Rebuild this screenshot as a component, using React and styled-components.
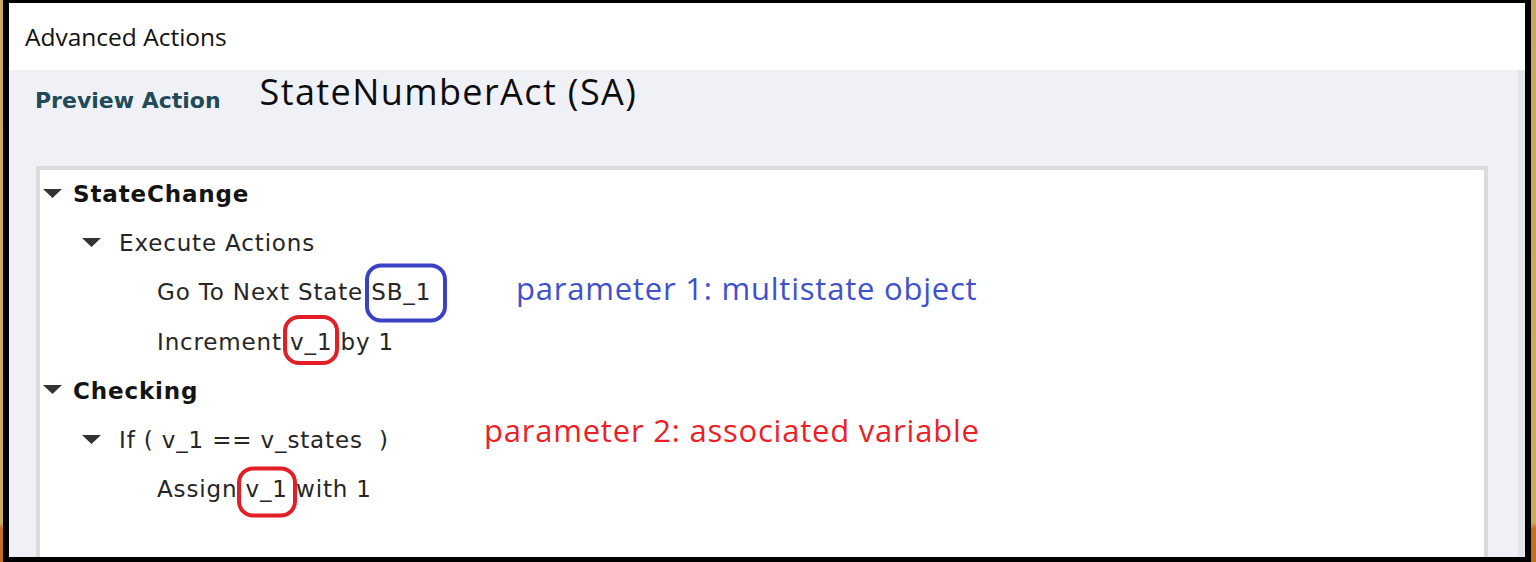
import React from "react";
import styled, { createGlobalStyle } from "styled-components";

const Global = createGlobalStyle`
  html, body { margin: 0; padding: 0; }
  body {
    width: 1536px;
    height: 562px;
    overflow: hidden;
    background: #c9ab62;
  }
  #root { height: 562px; }
`;

const Desktop = styled.div`
  height: 562px;
  display: flex;
  padding: 0 5px 0 3px;
  box-sizing: border-box;
  background: linear-gradient(to bottom, #c7a95f 0%, #c9ab62 93%, #c27320 94%, #c06e1c 100%);
`;

const Window = styled.div`
  flex: 1;
  display: flex;
  flex-direction: column;
  border-style: solid;
  border-color: #000;
  border-width: 3px 6px 5px 6px;
  box-sizing: border-box;
  min-width: 0;
  overflow: hidden;
`;

const Header = styled.div`
  height: 67px;
  flex: none;
  box-sizing: border-box;
  background: #fff;
  padding: 20px 0 0 16px;
  font-family: "Open Sans", "Noto Sans", sans-serif;
  font-size: 24.5px;
  line-height: 28px;
  color: #111;
`;

const Panel = styled.div`
  flex: 1;
  min-height: 0;
  display: flex;
  flex-direction: column;
  background: #f0f1f6;
  border-right: 7px solid #e4e5ea;
  padding: 0 30px 0 27px;
`;

const TitleRow = styled.div`
  display: flex;
  align-items: flex-start;
  flex: none;
`;

const PreviewLabel = styled.div`
  margin: 18px 0 0 -1px;
  font-family: "DejaVu Sans", Verdana, sans-serif;
  font-weight: bold;
  font-size: 22px;
  line-height: 26px;
  color: #1f4a59;
  white-space: nowrap;
`;

const ActionName = styled.div`
  margin-left: 39px;
  font-family: "Open Sans", "Noto Sans", sans-serif;
  font-size: 36px;
  line-height: 44px;
  letter-spacing: 1.4px;
  color: #0c0c0c;
  white-space: nowrap;
`;

const Tree = styled.div`
  position: relative;
  flex: 1;
  margin-top: 52px;
  background: #fff;
  border: 4px solid #dadbdf;
  border-bottom: none;
`;

const Row = styled.div`
  height: 49.2px;
  display: flex;
  align-items: center;
  padding-left: ${(p) => p.$indent}px;
  font-family: "DejaVu Sans", Verdana, sans-serif;
  font-size: 23px;
  line-height: 49.2px;
  letter-spacing: 0.85px;
  font-weight: ${(p) => (p.$bold ? "bold" : "normal")};
  color: ${(p) => (p.$bold ? "#141414" : "#262626")};
  white-space: pre;
`;

const CaretBox = styled.svg`
  flex: none;
  width: 19px;
  height: 9px;
  margin-right: ${(p) => p.$gap}px;
  margin-bottom: 3px;
`;

const Caret = ({ gap }) => (
  <CaretBox $gap={gap} viewBox="0 0 19 9">
    <polygon points="0,0 19,0 9.5,9" fill="#333" />
  </CaretBox>
);

const Param = styled.span`
  position: relative;
  &::after {
    content: "";
    position: absolute;
    left: -${(p) => p.$l}px;
    right: -${(p) => p.$r}px;
    top: 50%;
    height: ${(p) => p.$h}px;
    transform: translateY(calc(-50% + ${(p) => p.$dy}px));
    border: 4px solid ${(p) => (p.$tone === "blue" ? "#3b41c6" : "#e21f27")};
    border-radius: 16px;
    box-sizing: border-box;
  }
`;

const Note = styled.div`
  position: absolute;
  left: ${(p) => p.$x}px;
  top: ${(p) => p.$y}px;
  font-family: "Open Sans", "Noto Sans", sans-serif;
  font-size: 31px;
  line-height: 40px;
  letter-spacing: 0.78px;
  color: ${(p) => (p.$tone === "blue" ? "#4150cc" : "#ec1f27")};
  white-space: nowrap;
`;

export default function App() {
  return (
    <>
      <Global />
      <Desktop>
        <Window>
          <Header>Advanced Actions</Header>
          <Panel>
            <TitleRow>
              <PreviewLabel>Preview Action</PreviewLabel>
              <ActionName>StateNumberAct (SA)</ActionName>
            </TitleRow>
            <Tree>
              <Row $indent={3} $bold>
                <Caret gap={11} />
                StateChange
              </Row>
              <Row $indent={42}>
                <Caret gap={18} />
                Execute Actions
              </Row>
              <Row $indent={117}>
                {"Go To Next State "}
                <Param $tone="blue" $l={6} $r={16} $h={59} $dy={0}>
                  SB_1
                </Param>
              </Row>
              <Row $indent={117}>
                {"Increment "}
                <Param $tone="red" $l={7} $r={7} $h={50} $dy={-2}>
                  v_1
                </Param>
                {" by 1"}
              </Row>
              <Row $indent={3} $bold>
                <Caret gap={11} />
                Checking
              </Row>
              <Row $indent={42}>
                <Caret gap={18} />
                {"If ( v_1 == v_states  )"}
              </Row>
              <Row $indent={117}>
                {"Assign "}
                <Param $tone="red" $l={9} $r={9} $h={51} $dy={2}>
                  v_1
                </Param>
                {" with 1"}
              </Row>
              <Note $tone="blue" $x={476} $y={98}>
                parameter 1: multistate object
              </Note>
              <Note $tone="red" $x={444} $y={240}>
                parameter 2: associated variable
              </Note>
            </Tree>
          </Panel>
        </Window>
      </Desktop>
    </>
  );
}
